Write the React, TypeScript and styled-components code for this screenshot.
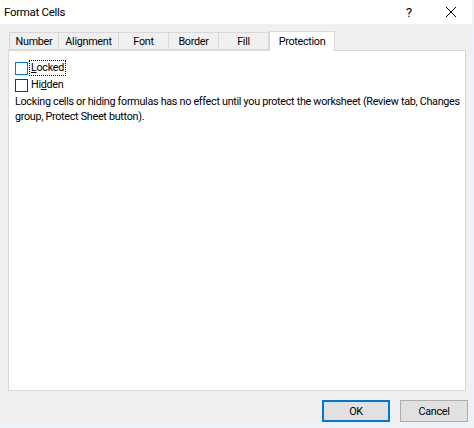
import React from 'react';
import styled, { createGlobalStyle } from 'styled-components';

const GlobalStyle = createGlobalStyle`
  html, body {
    margin: 0;
    padding: 0;
    background: #eef3f9;
  }
  body {
    font-family: Roboto, "Open Sans", "Liberation Sans", sans-serif;
    font-size: 10.8px;
    letter-spacing: -0.3px;
    color: #000;
  }
`;

const Window = styled.div`
  width: 472px;
  height: 424px;
  background: #f0f0f0;
  display: flex;
  flex-direction: column;
`;

const TitleBar = styled.div`
  height: 24px;
  background: #fff;
  display: flex;
  align-items: center;
  padding-left: 4px;
`;

const Title = styled.div`
  flex: 1;
  font-size: 11.5px;
`;

const TitleButton = styled.div`
  width: 42px;
  display: flex;
  justify-content: center;
  font-size: 13px;
`;

const Body = styled.div`
  flex: 1;
  display: flex;
  flex-direction: column;
  padding: 7px 4px 0 8px;
`;

const TabRow = styled.div`
  display: flex;
  align-items: flex-end;
  height: 19px;
  padding-left: 1px;
`;

const Tab = styled.div<{ $active?: boolean; $w: number }>`
  width: ${p => p.$w}px;
  height: ${p => (p.$active ? 20 : 18)}px;
  box-sizing: border-box;
  border: 1px solid #d9d9d9;
  border-bottom: ${p => (p.$active ? 'none' : '1px solid #d9d9d9')};
  border-left: ${p => (p.$active ? '1px solid #d9d9d9' : 'none')};
  background: ${p => (p.$active ? '#fff' : '#f0f0f0')};
  display: flex;
  align-items: center;
  justify-content: center;
  margin-bottom: ${p => (p.$active ? -1 : 0)}px;
  position: relative;
  z-index: ${p => (p.$active ? 1 : 0)};
  &:first-child {
    border-left: 1px solid #d9d9d9;
  }
`;

const Panel = styled.div`
  width: 458px;
  height: 341px;
  box-sizing: border-box;
  background: #fff;
  border: 1px solid #d9d9d9;
  padding: 9px 2px 0 6px;
`;

const CheckRow = styled.label`
  display: flex;
  align-items: center;
  height: 16px;
  margin-bottom: 1px;
`;

const Box = styled.span<{ $hot?: boolean }>`
  width: 13px;
  height: 13px;
  box-sizing: border-box;
  border: 1px solid ${p => (p.$hot ? '#0078d7' : '#333')};
  background: #fff;
  margin-right: 2px;
`;

const LabelText = styled.span<{ $focus?: boolean }>`
  padding: 0 1px;
  line-height: 14px;
  outline: ${p => (p.$focus ? '1px dotted #000' : 'none')};
  outline-offset: 0;
`;

const Note = styled.p`
  margin: 1px 0 0 0;
  line-height: 15px;
`;

const Footer = styled.div`
  display: flex;
  justify-content: flex-end;
  gap: 10px;
  padding: 9px 0 0 0;
`;

const Button = styled.button<{ $default?: boolean }>`
  width: 68px;
  height: 22px;
  box-sizing: border-box;
  font-family: inherit;
  font-size: 10.8px;
  letter-spacing: inherit;
  background: #e1e1e1;
  border: ${p => (p.$default ? '2px solid #0078d7' : '1px solid #adadad')};
  padding: 0;
  color: #000;
`;

const tabs: [string, number][] = [
  ['Number', 50],
  ['Alignment', 60],
  ['Font', 50],
  ['Border', 50],
  ['Fill', 50],
  ['Protection', 66],
];

export default function App() {
  return (
    <>
      <GlobalStyle />
      <Window>
        <TitleBar>
          <Title>Format Cells</Title>
          <TitleButton>?</TitleButton>
          <TitleButton>
            <svg width="12" height="12" viewBox="0 0 12 12">
              <path d="M1 1 L11 11 M11 1 L1 11" stroke="#000" strokeWidth="1" />
            </svg>
          </TitleButton>
        </TitleBar>
        <Body>
          <TabRow>
            {tabs.map(([name, w]) => (
              <Tab key={name} $w={w} $active={name === 'Protection'}>
                {name}
              </Tab>
            ))}
          </TabRow>
          <Panel>
            <CheckRow>
              <Box $hot />
              <LabelText $focus>
                <u>L</u>ocked
              </LabelText>
            </CheckRow>
            <CheckRow>
              <Box />
              <LabelText>
                Hi<u>d</u>den
              </LabelText>
            </CheckRow>
            <Note>
              Locking cells or hiding formulas has no effect until you protect the worksheet (Review tab, Changes
              group, Protect Sheet button).
            </Note>
          </Panel>
          <Footer>
            <Button $default>OK</Button>
            <Button>Cancel</Button>
          </Footer>
        </Body>
      </Window>
    </>
  );
}
